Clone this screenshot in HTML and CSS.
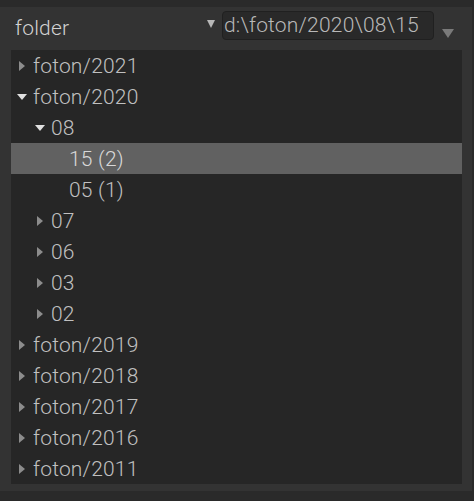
FILE: index.html
```html
<!DOCTYPE html>
<html>
<head>
<meta charset="utf-8">
<link rel="stylesheet" href="styles.css">
</head>
<body>
<div class="panel">
  <div class="header">
    <span class="title">folder</span>
    <span class="small-caret"></span>
    <div class="path">d:\foton/2020\08\15</div>
    <span class="big-caret"></span>
  </div>
  <div class="tree">
    <div class="row l0"><span class="arrow right"></span><span class="label">foton/2021</span></div>
    <div class="row l0"><span class="arrow down"></span><span class="label">foton/2020</span></div>
    <div class="row l1"><span class="arrow down"></span><span class="label">08</span></div>
    <div class="row l2 selected"><span class="arrow none"></span><span class="label">15 (2)</span></div>
    <div class="row l2"><span class="arrow none"></span><span class="label">05 (1)</span></div>
    <div class="row l1"><span class="arrow right"></span><span class="label">07</span></div>
    <div class="row l1"><span class="arrow right"></span><span class="label">06</span></div>
    <div class="row l1"><span class="arrow right"></span><span class="label">03</span></div>
    <div class="row l1"><span class="arrow right"></span><span class="label">02</span></div>
    <div class="row l0"><span class="arrow right"></span><span class="label">foton/2019</span></div>
    <div class="row l0"><span class="arrow right"></span><span class="label">foton/2018</span></div>
    <div class="row l0"><span class="arrow right"></span><span class="label">foton/2017</span></div>
    <div class="row l0"><span class="arrow right"></span><span class="label">foton/2016</span></div>
    <div class="row l0"><span class="arrow right"></span><span class="label">foton/2011</span></div>
  </div>
</div>
</body>
</html>
```
FILE: styles.css
```css
html, body {
  margin: 0;
  padding: 0;
  background: #2a2a2a;
  width: 474px;
  height: 501px;
  overflow: hidden;
  font-family: Roboto, "Liberation Sans", sans-serif;
}
.panel {
  margin-top: 7px;
  width: 472px;
  height: 484px;
  background: #333333;
  box-sizing: border-box;
  padding: 0 10px 7px 11px;
}
.header {
  height: 43px;
  display: flex;
  align-items: center;
}
.title {
  margin-left: 4px;
  font-size: 21px;
  font-weight: 300;
  letter-spacing: 0.2px;
  color: #d2d2d2;
  flex: 1;
  margin-top: -1px;
}
.small-caret {
  width: 0;
  height: 0;
  border-left: 4.5px solid transparent;
  border-right: 4.5px solid transparent;
  border-top: 8px solid #b8b8b8;
  margin-right: 7px;
  margin-top: -9px;
}
.path {
  width: 212px;
  height: 29px;
  box-sizing: border-box;
  border: 1px solid #202020;
  border-radius: 4px;
  background: #292929;
  color: #b8b8b8;
  font-size: 21px;
  font-weight: 300;
  letter-spacing: 0.2px;
  line-height: 27px;
  padding-left: 1px;
  margin-top: -6px;
  white-space: nowrap;
  overflow: hidden;
}
.big-caret {
  width: 0;
  height: 0;
  border-left: 6px solid transparent;
  border-right: 6px solid transparent;
  border-top: 9px solid #7a7a7a;
  margin-left: 8px;
  margin-right: 8px;
  margin-top: 9px;
}
.tree {
  background: #262626;
  height: 434px;
}
.row {
  height: 31px;
  display: flex;
  align-items: center;
  color: #c0c0c0;
  font-size: 21px;
  font-weight: 300;
  letter-spacing: 0.2px;
}
.row.selected {
  background: #616161;
  color: #d8d8d8;
}
.l0 { padding-left: 5px; }
.l1 { padding-left: 23px; }
.l2 { padding-left: 41px; }
.arrow {
  width: 11px;
  height: 11px;
  margin-right: 6px;
  display: flex;
  align-items: center;
  justify-content: center;
  flex: none;
}
.arrow.right::before {
  content: "";
  width: 0;
  height: 0;
  border-top: 5.5px solid transparent;
  border-bottom: 5.5px solid transparent;
  border-left: 6px solid #8c8c8c;
  margin-left: 1px;
}
.arrow.down::before {
  content: "";
  width: 0;
  height: 0;
  border-left: 5.5px solid transparent;
  border-right: 5.5px solid transparent;
  border-top: 6px solid #e0e0e0;
}
.label {
  white-space: nowrap;
}
```
